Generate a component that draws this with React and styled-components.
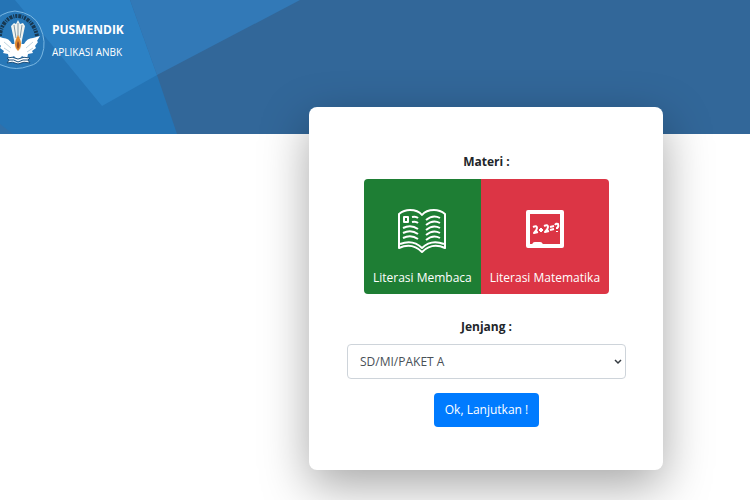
import React, { useState } from "react";
import styled, { createGlobalStyle } from "styled-components";

export default function App() {
  const [materi, setMateri] = useState("membaca");
  const [jenjang, setJenjang] = useState("sd");
  return (
    <>
      <GlobalStyle />
      <Header>
        <HeaderPattern />
        <Brand href="#">
          <Logo />
          <BrandText>
            <BrandTitle>PUSMENDIK</BrandTitle>
            <BrandSubtitle>APLIKASI ANBK</BrandSubtitle>
          </BrandText>
        </Brand>
      </Header>
      <Main>
        <Card onSubmit={(e) => e.preventDefault()}>
          <Label as="div" id="materi">
            Materi :
          </Label>
          <ButtonGroup role="group" aria-labelledby="materi">
            <MateriButton
              type="button"
              color="#1e7e34"
              aria-pressed={materi === "membaca"}
              onClick={() => setMateri("membaca")}
            >
              <BookIcon />
              Literasi Membaca
            </MateriButton>
            <MateriButton
              type="button"
              color="#dc3545"
              aria-pressed={materi === "matematika"}
              onClick={() => setMateri("matematika")}
            >
              <BoardIcon />
              Literasi Matematika
            </MateriButton>
          </ButtonGroup>
          <Label htmlFor="jenjang">Jenjang :</Label>
          <SelectWrap>
            <Select
              id="jenjang"
              value={jenjang}
              onChange={(e) => setJenjang(e.target.value)}
            >
              <option value="sd">SD/MI/PAKET A</option>
              <option value="smp">SMP/MTs/PAKET B</option>
              <option value="sma">SMA/MA/PAKET C</option>
            </Select>
            <Chevron viewBox="0 0 16 12" aria-hidden="true">
              <path d="M2 2l6 6 6-6" />
            </Chevron>
          </SelectWrap>
          <SubmitButton type="submit">Ok, Lanjutkan !</SubmitButton>
        </Card>
      </Main>
    </>
  );
}

const HeaderPattern = () => (
  <Pattern viewBox="0 0 750 134" aria-hidden="true">
    <path fill="#2574b5" d="M0 0h130l27 75 20 59H0z" />
    <path fill="#2c81c4" d="M15 0h115l27 75-55 31z" />
    <path fill="#3279b7" d="M130 0h170L157 75z" />
    <path fill="#3070aa" d="M0 124l13 10H0z" />
  </Pattern>
);

const Logo = () => (
  <LogoSvg viewBox="0 0 45 60" role="img" aria-label="Tut Wuri Handayani">
    <path
      d="M15 1Q34 3 40 17Q47 32 42 45Q39 54 29 56Q16 61 4 56Q-8 53-10 42Q-15 4 15 1z"
      fill="#2878b8"
      stroke="#7ab7e2"
    />
    <path
      d="M0 26C0 17 7 6 17 6S35 15 37 26"
      fill="none"
      stroke="#173852"
      strokeWidth="4"
      strokeDasharray="2 1 3 1 1 1"
    />
    <path
      d="M12 34Q9 28 3 28L-3 26L0 31-2 32 1 36 0 38 4 41 3 43 8 44 9 49 14 46 18 51 22 46 27 49 28 44 33 43 32 41 36 38 35 36 38 32 37 31 40 26 33 28Q27 28 24 34z"
      fill="#fff"
    />
    <path d="M11 16l3-3 2 1 2-4 2 4 3-1 2 3-3 14-1 9h-6l-1-9z" fill="#f2f4ef" />
    <path d="M14 15l2 13M18 13v13M22 15l-2 13" stroke="#8198a6" fill="none" />
    <path d="M4 32l7 6M4 38l6 4M33 32l-7 6M33 38l-6 4" stroke="#bed3df" fill="none" />
    <path d="M18 25c-4 7-4 12 0 16 4-4 4-9 0-16z" fill="#e38b2e" />
    <path d="M18 31c-2 4-1 7 0 8 2-2 2-5 0-8z" fill="#914b24" />
    <path
      d="M7 48q5-2 11 1 6-3 12-1l-2 2 2 3q-6-2-12 1-6-3-11-1l2-3z"
      fill="#fff"
      stroke="#1a4f7c"
    />
    <path d="M9 50q5-1 9 2 5-3 10-2" stroke="#1a4f7c" fill="none" />
  </LogoSvg>
);

const BookIcon = () => (
  <Icon viewBox="0 0 48 48" aria-hidden="true">
    <path
      d="M24 8Q20 3 12 3Q6 3 1 7V41Q14 35 24 45Q34 35 47 41V7Q42 3 36 3Q28 3 24 8z"
      strokeWidth="2"
    />
    <path d="M2 37Q15 32 24 41Q33 32 46 37" strokeWidth="2" />
    <path d="M6 10h4v5H6zM14 10q4-1 6 1M14 15q4-1 6 1" strokeWidth="2" />
    <path
      d="M5 21q8-4 15 1M5 26q8-4 15 1M5 31q8-4 15 1M28 13q7-6 14-2M28 18q7-6 14-2M28 23q7-6 14-2M28 28q7-6 14-2M28 33q7-6 14-2"
      strokeWidth="2"
    />
  </Icon>
);

const BoardIcon = () => (
  <Icon viewBox="0 0 48 48" aria-hidden="true">
    <path d="M7 5h34v34H7z" strokeWidth="4" />
    <path d="M11 39q0-4 3-4h5q3 0 3 4z" fill="#fff" stroke="none" />
    <path
      d="M12 20q4-2 4 1 0 2-3 5l4-1M18 23h4M20 21v4M23 19q4-2 4 1 0 2-3 5l4-1M29 20l4-1M29 23l4-1M34 18q1-2 3-1 1 3-1 4v1M36 24v1"
      strokeWidth="2"
    />
  </Icon>
);

const GlobalStyle = createGlobalStyle`
  * {
    box-sizing: border-box;
  }
  body {
    margin: 0;
    background-color: #ffffff;
    color: #212529;
    font-family: "Open Sans", "Noto Sans", sans-serif;
    font-size: 12px;
    line-height: 20px;
  }
  button, select {
    font-family: inherit;
    font-size: inherit;
    line-height: inherit;
  }
`;

const Header = styled.header`
  position: relative;
  height: 134px;
  padding-top: 10px;
  background-color: #326799;
  overflow: hidden;
`;

const Pattern = styled.svg`
  position: absolute;
  left: 0;
  top: 0;
  width: 750px;
  height: 134px;
`;

const Brand = styled.a`
  position: relative;
  display: inline-flex;
  gap: 7px;
  color: #ffffff;
  text-decoration: none;
`;

const LogoSvg = styled.svg`
  width: 45px;
  height: 60px;
`;

const BrandText = styled.div`
  display: flex;
  flex-direction: column;
  padding-top: 8px;
`;

const BrandTitle = styled.strong`
  font-size: 12px;
  line-height: 24px;
`;

const BrandSubtitle = styled.span`
  font-size: 10px;
  line-height: 20px;
`;

const Main = styled.main`
  position: relative;
  display: flex;
  justify-content: flex-end;
  margin-top: -27px;
  padding: 0 87px 30px 16px;
`;

const Card = styled.form`
  display: flex;
  flex-direction: column;
  align-items: center;
  width: 100%;
  max-width: 354px;
  padding: 45px 37px 43px 38px;
  border-radius: 8px;
  background-color: #ffffff;
  box-shadow: 0 16px 48px rgba(0, 0, 0, 0.35);
`;

const Label = styled.label`
  margin-bottom: 7px;
  font-weight: 700;
`;

const ButtonGroup = styled.div`
  display: flex;
  margin-bottom: 23px;
  border-radius: 4px;
  overflow: hidden;
`;

const MateriButton = styled.button`
  display: flex;
  flex-direction: column;
  align-items: center;
  gap: 13px;
  padding: 28px 9px 6px;
  border: 0;
  background-color: ${({ color }) => color};
  color: #ffffff;
  white-space: nowrap;
  cursor: pointer;
`;

const Icon = styled.svg`
  width: 48px;
  height: 48px;
  fill: none;
  stroke: #ffffff;
  stroke-linejoin: round;
`;

const SelectWrap = styled.div`
  position: relative;
  width: 100%;
  margin-bottom: 14px;
`;

const Select = styled.select`
  display: block;
  width: 100%;
  height: 35px;
  padding: 0 24px 0 12px;
  border: 1px solid #ced4da;
  border-radius: 4px;
  background-color: #ffffff;
  color: #495057;
  appearance: none;
`;

const Chevron = styled.svg`
  position: absolute;
  right: 4px;
  top: 15px;
  width: 8px;
  height: 6px;
  fill: none;
  stroke: #343a40;
  stroke-width: 3;
  pointer-events: none;
`;

const SubmitButton = styled.button`
  padding: 7px 11px;
  border: 0;
  border-radius: 4px;
  background-color: #007bff;
  color: #ffffff;
  cursor: pointer;
`;
